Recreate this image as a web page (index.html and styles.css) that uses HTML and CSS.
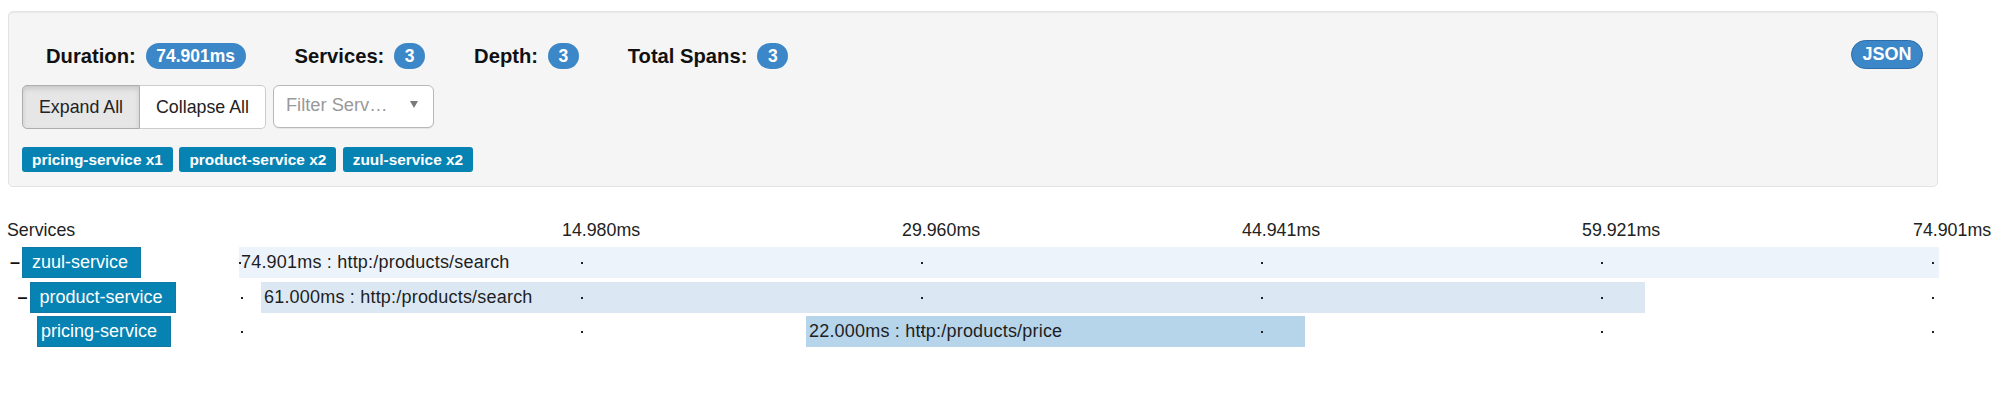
FILE: index.html
```html
<!DOCTYPE html>
<html>
<head>
<meta charset="utf-8">
<title>Trace</title>
<link rel="stylesheet" href="styles.css">
</head>
<body>
<div class="panel">
  <div class="stats">
    <div class="stat-list">
      <div class="stat"><span class="stat-label">Duration:</span><span class="badge">74.901ms</span></div>
      <div class="stat"><span class="stat-label">Services:</span><span class="badge">3</span></div>
      <div class="stat"><span class="stat-label">Depth:</span><span class="badge">3</span></div>
      <div class="stat"><span class="stat-label">Total Spans:</span><span class="badge">3</span></div>
    </div>
    <span class="json-btn">JSON</span>
  </div>
  <div class="controls">
    <div class="btn-group">
      <span class="btn btn-active">Expand All</span>
      <span class="btn">Collapse All</span>
    </div>
    <div class="filter">
      <span class="filter-text">Filter Serv…</span>
      <span class="caret"></span>
    </div>
  </div>
  <div class="labels">
    <span class="svc-tag">pricing-service x1</span>
    <span class="svc-tag">product-service x2</span>
    <span class="svc-tag">zuul-service x2</span>
  </div>
</div>

<div class="trace">
  <div class="trace-header">
    <div class="names-head">Services</div>
    <div class="ticks-head">
      <span class="tick-label" style="left:323px">14.980ms</span>
      <span class="tick-label" style="left:663px">29.960ms</span>
      <span class="tick-label" style="left:1003px">44.941ms</span>
      <span class="tick-label" style="left:1343px">59.921ms</span>
      <span class="tick-label" style="left:1674px">74.901ms</span>
    </div>
  </div>

  <div class="trace-row">
    <div class="name-cell depth-0">
      <span class="expander">–</span>
      <span class="svc-name pad-a">zuul-service</span>
    </div>
    <div class="span-cell">
      <div class="bar bar-1" style="left:0px;width:1700px">74.901ms : http:/products/search</div>
      <span class="dot" style="left:0px"></span>
      <span class="dot" style="left:342px"></span>
      <span class="dot" style="left:682px"></span>
      <span class="dot" style="left:1022px"></span>
      <span class="dot" style="left:1362px"></span>
      <span class="dot" style="left:1693px"></span>
    </div>
  </div>

  <div class="trace-row">
    <div class="name-cell depth-1">
      <span class="expander">–</span>
      <span class="svc-name pad-a">product-service</span>
    </div>
    <div class="span-cell">
      <div class="bar bar-2" style="left:22px;width:1384px">61.000ms : http:/products/search</div>
      <span class="dot" style="left:2px"></span>
      <span class="dot" style="left:342px"></span>
      <span class="dot" style="left:682px"></span>
      <span class="dot" style="left:1022px"></span>
      <span class="dot" style="left:1362px"></span>
      <span class="dot" style="left:1693px"></span>
    </div>
  </div>

  <div class="trace-row">
    <div class="name-cell depth-2">
      <span class="expander"></span>
      <span class="svc-name pad-b">pricing-service</span>
    </div>
    <div class="span-cell">
      <div class="bar bar-3" style="left:567px;width:499px">22.000ms : http:/products/price</div>
      <span class="dot" style="left:2px"></span>
      <span class="dot" style="left:342px"></span>
      <span class="dot" style="left:682px"></span>
      <span class="dot" style="left:1022px"></span>
      <span class="dot" style="left:1362px"></span>
      <span class="dot" style="left:1693px"></span>
    </div>
  </div>
</div>
</body>
</html>
```

FILE: styles.css
```css
* { box-sizing: border-box; }

html, body {
  margin: 0;
  padding: 0;
  background: #ffffff;
}

body {
  font-family: "Liberation Sans", Arial, Helvetica, sans-serif;
  color: #222;
  width: 2000px;
  height: 402px;
  overflow: hidden;
}

/* ---------- summary panel ---------- */
.panel {
  margin: 11px 0 0 8px;
  width: 1930px;
  height: 176px;
  background: #f5f5f5;
  border: 1px solid #e3e3e3;
  border-radius: 5px;
  box-shadow: inset 0 1px 1px rgba(0, 0, 0, 0.05);
  padding: 28px 14px 14px 13px;
  display: flex;
  flex-direction: column;
}

.stats {
  display: flex;
  justify-content: space-between;
  align-items: flex-end;
  height: 29px;
}

.stat-list {
  display: flex;
  padding-left: 24px;
  gap: 49px;
}

.stat {
  display: flex;
  align-items: center;
  gap: 10px;
  height: 26px;
}

.stat-label {
  font-weight: bold;
  font-size: 20.2px;
  color: #111;
}

.badge {
  display: inline-flex;
  align-items: center;
  justify-content: center;
  height: 26px;
  padding: 0 10.5px;
  border-radius: 13px;
  background: #3c87c7;
  color: #fff;
  font-weight: bold;
  font-size: 17.5px;
}

.json-btn {
  display: inline-flex;
  align-items: center;
  justify-content: center;
  width: 72px;
  height: 29px;
  border-radius: 15px;
  background: #3c87c7;
  border: 1px solid #2d6ca6;
  color: #fff;
  font-weight: bold;
  font-size: 18px;
}

.controls {
  display: flex;
  align-items: flex-start;
  gap: 7px;
  margin-top: 16px;
}

.btn-group {
  display: flex;
  height: 44px;
}

.btn {
  display: inline-flex;
  align-items: center;
  padding: 0 16px;
  background: #fff;
  border: 1px solid #ccc;
  font-size: 17.8px;
  color: #222;
}

.btn:first-child {
  border-radius: 5px 0 0 5px;
}

.btn:last-child {
  border-radius: 0 5px 5px 0;
  border-left: none;
}

.btn-active {
  background: #e6e6e6;
  border-color: #adadad;
  box-shadow: inset 0 3px 5px rgba(0, 0, 0, 0.125);
}

.filter {
  width: 161px;
  height: 43px;
  background: #fff;
  border: 1px solid #b8b8b8;
  border-radius: 6px;
  box-shadow: 0 1px 0 rgba(0, 0, 0, 0.06);
  display: flex;
  align-items: center;
  justify-content: space-between;
  padding: 0 15px 4px 12px;
}

.filter-text {
  font-size: 18.3px;
  color: #999;
  white-space: nowrap;
}

.caret {
  width: 0;
  height: 0;
  border-left: 4.5px solid transparent;
  border-right: 4.5px solid transparent;
  border-top: 7px solid #7a7a7a;
  margin-bottom: 1px;
}

.labels {
  display: flex;
  gap: 6.5px;
  margin-top: 18px;
}

.svc-tag {
  display: inline-flex;
  align-items: center;
  height: 25px;
  padding: 0 10px;
  border-radius: 3px;
  background: #0683b3;
  color: #fff;
  font-weight: bold;
  font-size: 15.4px;
}

/* ---------- trace timeline ---------- */
.trace {
  margin-top: 31px;
  font-size: 17.8px;
  color: #222;
}

.trace-header {
  display: flex;
  height: 29px;
  line-height: 25px;
}

.names-head {
  width: 239px;
  padding-left: 7px;
}

.ticks-head {
  position: relative;
  width: 1700px;
}

.tick-label {
  position: absolute;
  top: 0;
  white-space: nowrap;
}

.trace-row {
  display: flex;
  height: 34.5px;
}

.name-cell {
  width: 239px;
  display: flex;
  align-items: flex-start;
}

.depth-0 { padding-left: 10px; }
.depth-1 { padding-left: 17.5px; }
.depth-2 { padding-left: 25px; }

.expander {
  width: 12px;
  flex: none;
  font-weight: bold;
  font-size: 18px;
  line-height: 31px;
  color: #111;
}

.svc-name {
  display: inline-flex;
  align-items: center;
  height: 31px;
  background: #0683b3;
  border: 1px solid #1179a3;
  color: #fff;
  font-size: 18px;
  white-space: nowrap;
}

.pad-a { padding: 0 12px 0 9px; }
.pad-b { padding: 0 13px 0 3px; }

.span-cell {
  position: relative;
  width: 1700px;
  height: 31px;
}

.bar {
  position: absolute;
  top: 0;
  height: 31px;
  line-height: 31px;
  padding-left: 3px;
  white-space: nowrap;
  color: #1e1e1e;
  font-size: 18px;
  letter-spacing: 0.2px;
}

.bar-1 { background: #ecf3fa; padding-left: 2px; }
.bar-2 { background: #dbe8f4; }
.bar-3 { background: #b6d4ea; }

.dot {
  position: absolute;
  top: 15px;
  width: 2px;
  height: 2px;
  background: #222;
}
```
